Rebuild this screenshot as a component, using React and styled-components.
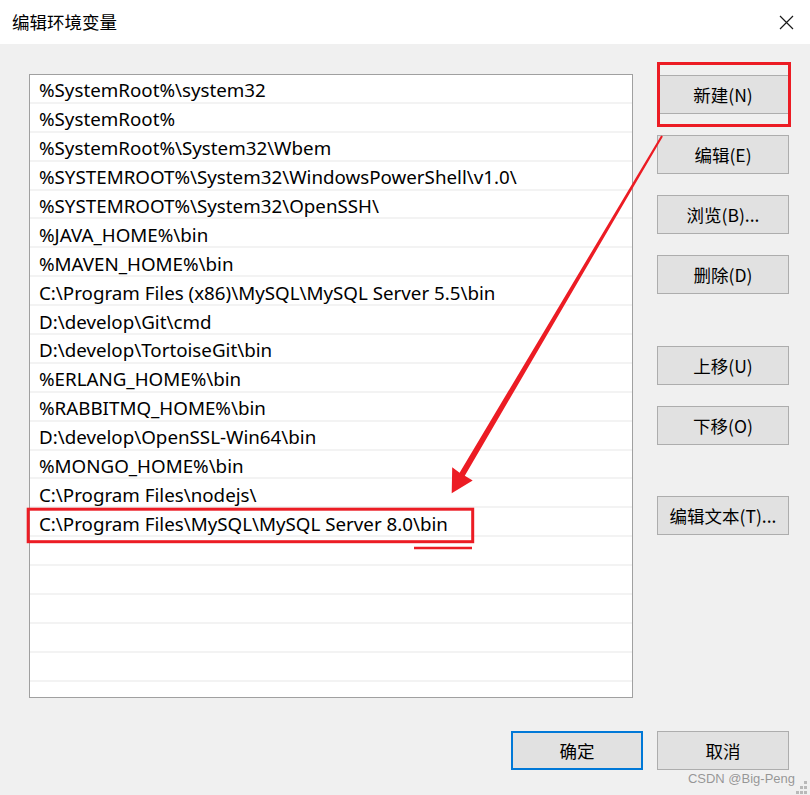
import React from "react";
import styled, { createGlobalStyle } from "styled-components";

const GlobalStyle = createGlobalStyle`
  html, body {
    margin: 0;
    padding: 0;
    background: #f0f0f0;
  }
`;

const paths = [
  "%SystemRoot%\\system32",
  "%SystemRoot%",
  "%SystemRoot%\\System32\\Wbem",
  "%SYSTEMROOT%\\System32\\WindowsPowerShell\\v1.0\\",
  "%SYSTEMROOT%\\System32\\OpenSSH\\",
  "%JAVA_HOME%\\bin",
  "%MAVEN_HOME%\\bin",
  "C:\\Program Files (x86)\\MySQL\\MySQL Server 5.5\\bin",
  "D:\\develop\\Git\\cmd",
  "D:\\develop\\TortoiseGit\\bin",
  "%ERLANG_HOME%\\bin",
  "%RABBITMQ_HOME%\\bin",
  "D:\\develop\\OpenSSL-Win64\\bin",
  "%MONGO_HOME%\\bin",
  "C:\\Program Files\\nodejs\\",
  "C:\\Program Files\\MySQL\\MySQL Server 8.0\\bin",
  "",
  "",
  "",
  "",
  "",
  "",
];

export default function App() {
  return (
    <>
      <GlobalStyle />
      <StyledWindow>
        <StyledTitleBar>
          <StyledTitle>编辑环境变量</StyledTitle>
          <StyledClose>
            <svg width="15" height="15" viewBox="0 0 15 15">
              <path d="M1 1 L14 14 M14 1 L1 14" stroke="#1a1a1a" strokeWidth="1.2" />
            </svg>
          </StyledClose>
        </StyledTitleBar>

        <StyledBody>
          <StyledList>
            {paths.map((p, i) => (
              <StyledRow key={i}>{p}</StyledRow>
            ))}
          </StyledList>

          <StyledSide>
            <StyledButton>新建(N)</StyledButton>
            <StyledButton>编辑(E)</StyledButton>
            <StyledButton>浏览(B)...</StyledButton>
            <StyledButton>删除(D)</StyledButton>
            <StyledButton $gap={52}>上移(U)</StyledButton>
            <StyledButton>下移(O)</StyledButton>
            <StyledButton $gap={51}>编辑文本(T)...</StyledButton>
          </StyledSide>
        </StyledBody>

        <StyledFooter>
          <StyledButton $primary>确定</StyledButton>
          <StyledButton>取消</StyledButton>
        </StyledFooter>

        <StyledWatermark>CSDN @Big-Peng</StyledWatermark>

        <StyledOverlay width="810" height="795" viewBox="0 0 810 795">
          <rect x="658.5" y="63.5" width="131" height="62" fill="none" stroke="#ec1c24" strokeWidth="3" />
          <rect x="28.2" y="509.2" width="444.5" height="32.5" fill="none" stroke="#ec1c24" strokeWidth="3" />
          <line x1="414" y1="548" x2="472" y2="548" stroke="#ec1c24" strokeWidth="2.5" />
          <polygon
            points="451.7,493.3 452.2,467.3 459.6,472.7 661.1,135.5 662.9,136.5 464.8,475.7 472.7,480.5"
            fill="#ec1c24"
          />
          <g fill="#b9b9b9">
            <rect x="804" y="781" width="3" height="3" />
            <rect x="800" y="786" width="3" height="3" />
            <rect x="804" y="786" width="3" height="3" />
            <rect x="796" y="791" width="3" height="3" />
            <rect x="800" y="791" width="3" height="3" />
            <rect x="804" y="791" width="3" height="3" />
          </g>
        </StyledOverlay>
      </StyledWindow>
    </>
  );
}

const uiFont = `"Microsoft YaHei UI", "Noto Sans", "Noto Sans CJK SC", sans-serif`;

const StyledWindow = styled.div`
  position: relative;
  width: 810px;
  height: 795px;
  background: #f0f0f0;
  overflow: hidden;
  font-family: ${uiFont};
  color: #000;
`;

const StyledTitleBar = styled.div`
  height: 44px;
  background: #ffffff;
  display: flex;
  align-items: center;
  justify-content: space-between;
  padding: 0 16px 0 12px;
  box-sizing: border-box;
`;

const StyledTitle = styled.div`
  font-family: "Noto Sans CJK SC", sans-serif;
  font-size: 17.5px;
  color: #000;
  margin-top: -1px;
`;

const StyledClose = styled.div`
  display: flex;
  align-items: center;
  margin-top: 1px;
`;

const StyledBody = styled.div`
  display: flex;
  align-items: flex-start;
  padding: 30px 0 0 29px;
  gap: 24px;
`;

const StyledList = styled.div`
  width: 604px;
  height: 624px;
  box-sizing: border-box;
  border: 1px solid #a0a0a0;
  background: #ffffff;
  overflow: hidden;
`;

const StyledRow = styled.div`
  height: 28.9px;
  box-sizing: border-box;
  border-bottom: 2px solid #f3f3f3;
  padding: 3px 0 0 9px;
  display: flex;
  align-items: center;
  font-size: 18.75px;
  white-space: nowrap;
  color: #000;
`;

const StyledSide = styled.div`
  display: flex;
  flex-direction: column;
  gap: 21px;
  padding-top: 1px;
`;

const StyledButton = styled.button`
  width: 132px;
  height: 39px;
  box-sizing: border-box;
  margin-top: ${(p) => (p.$gap ? p.$gap - 21 : 0)}px;
  background: #e1e1e1;
  border: ${(p) => (p.$primary ? "2px solid #0078d7" : "1px solid #adadad")};
  border-radius: 0;
  font-family: "Noto Sans CJK SC", sans-serif;
  font-size: 17.5px;
  color: #000;
  padding: 0;
  display: flex;
  align-items: center;
  justify-content: center;
`;

const StyledFooter = styled.div`
  display: flex;
  justify-content: flex-end;
  gap: 14px;
  padding: 33px 21px 0 0;
`;

const StyledWatermark = styled.div`
  position: absolute;
  right: 15px;
  bottom: 9px;
  font-family: "Liberation Sans", sans-serif;
  font-size: 13px;
  color: rgba(120, 120, 120, 0.75);
`;

const StyledOverlay = styled.svg`
  position: absolute;
  top: 0;
  left: 0;
  pointer-events: none;
`;
